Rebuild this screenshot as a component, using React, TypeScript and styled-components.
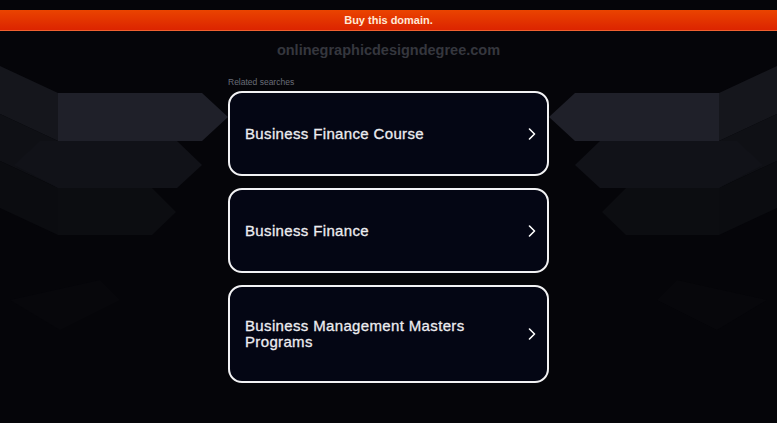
import React from 'react';
import styled, { createGlobalStyle } from 'styled-components';

const GlobalStyle = createGlobalStyle`
  html, body {
    margin: 0;
    padding: 0;
    background: #050509;
  }
  body {
    font-family: 'Liberation Sans', Arial, sans-serif;
  }
`;

const searches = [
  'Business Finance Course',
  'Business Finance',
  'Business Management Masters Programs',
];

// decorative arrow backdrop, mirrored on each side
const Backdrop = () => (
  <BackdropSvg viewBox="0 0 777 423" preserveAspectRatio="none">
    {/* left side */}
    <polygon points="0,66 58,93 58,141 0,114" fill="#15161c" />
    <polygon points="0,114 58,141 58,188 0,161" fill="#0f1015" />
    <polygon points="0,161 58,188 58,235 0,208" fill="#0b0c10" />
    <polygon points="58,93 202,93 228,117 202,141 58,141" fill="#1f2029" />
    <polygon points="14,165 40,141 58,141 177,141 202,165 177,188 58,188" fill="#111218" />
    <polygon points="58,188 152,188 176,212 152,235 58,235" fill="#0c0d11" />
    {/* right side */}
    <polygon points="777,66 719,93 719,141 777,114" fill="#15161c" />
    <polygon points="777,114 719,141 719,188 777,161" fill="#0f1015" />
    <polygon points="777,161 719,188 719,235 777,208" fill="#0b0c10" />
    <polygon points="719,93 575,93 549,117 575,141 719,141" fill="#1f2029" />
    <polygon points="763,165 737,141 719,141 600,141 575,165 600,188 719,188" fill="#111218" />
    <polygon points="719,188 626,188 602,212 626,235 719,235" fill="#0c0d11" />
    {/* faint reflections */}
    <polygon points="10,300 100,280 120,300 60,330" fill="#07070b" />
    <polygon points="767,300 677,280 657,300 717,330" fill="#07070b" />
  </BackdropSvg>
);

const Chevron = () => (
  <ChevronSvg viewBox="0 0 8 12" aria-hidden>
    <path d="M1.5 1 L6.5 6 L1.5 11" fill="none" stroke="#ffffff" strokeWidth="1.6" strokeLinecap="round" strokeLinejoin="round" />
  </ChevronSvg>
);

export default function App() {
  return (
    <Page>
      <GlobalStyle />
      <Backdrop />
      <BuyBar>Buy this domain.</BuyBar>
      <Domain>onlinegraphicdesigndegree.com</Domain>
      <Column>
        <Label>Related searches</Label>
        <List>
          {searches.map((s) => (
            <Card key={s} href="#">
              <CardText>{s}</CardText>
              <Chevron />
            </Card>
          ))}
        </List>
      </Column>
    </Page>
  );
}

const Page = styled.div`
  position: relative;
  min-height: 423px;
  padding-top: 10px;
  box-sizing: border-box;
  overflow: hidden;
`;

const BackdropSvg = styled.svg`
  position: absolute;
  inset: 0;
  width: 100%;
  height: 423px;
  z-index: 0;
`;

const BuyBar = styled.div`
  position: relative;
  z-index: 1;
  height: 21px;
  background: linear-gradient(to bottom, #ea4400, #dc2400);
  border-bottom: 1px solid #f06030;
  display: flex;
  align-items: center;
  justify-content: center;
  color: #ffe9d8;
  font-size: 11px;
  font-weight: bold;
  box-sizing: border-box;
`;

const Domain = styled.div`
  position: relative;
  z-index: 1;
  text-align: center;
  margin-top: 10px;
  color: #35373e;
  font-size: 14.5px;
  font-weight: bold;
  line-height: 18px;
`;

const Column = styled.div`
  position: relative;
  z-index: 1;
  width: 321px;
  margin: 18px auto 0;
`;

const Label = styled.div`
  font-size: 8.5px;
  color: #6a6d78;
  line-height: 11px;
  margin-bottom: 3px;
`;

const List = styled.div`
  display: flex;
  flex-direction: column;
  gap: 12px;
`;

const Card = styled.a`
  display: flex;
  align-items: center;
  justify-content: space-between;
  gap: 12px;
  min-height: 85px;
  padding: 31px 11px 31px 15px;
  box-sizing: border-box;
  border: 2px solid #f2f2f4;
  border-radius: 14px;
  background: #040614;
  text-decoration: none;
`;

const CardText = styled.span`
  color: #ececf0;
  font-size: 15px;
  line-height: 16px;
  letter-spacing: 0.35px;
  -webkit-text-stroke: 0.3px #ececf0;
  max-width: 240px;
`;

const ChevronSvg = styled.svg`
  width: 8px;
  height: 12px;
  flex-shrink: 0;
`;
